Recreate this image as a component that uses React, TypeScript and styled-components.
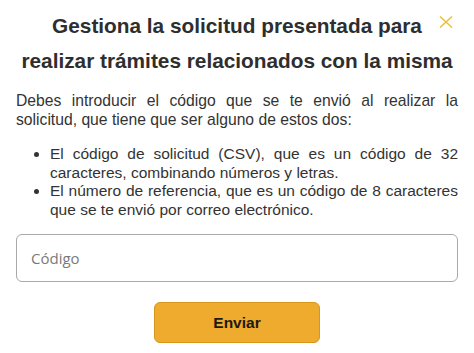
import styled, { createGlobalStyle } from "styled-components";

const GlobalStyle = createGlobalStyle`
  html, body {
    margin: 0;
    padding: 0;
    background: #fff;
  }
  body {
    font-family: "Liberation Sans", Arial, sans-serif;
    color: #333;
  }
`;

const Modal = styled.div`
  position: relative;
  width: 474px;
  box-sizing: border-box;
  padding: 8px 16px 10px;
`;

const Title = styled.h2`
  margin: 0;
  font-size: 20.8px;
  line-height: 35px;
  font-weight: bold;
  text-align: center;
  color: #2e2e2e;
`;

const CloseButton = styled.button`
  position: absolute;
  top: 13px;
  right: 19px;
  width: 18px;
  height: 18px;
  padding: 0;
  border: none;
  background: none;
  cursor: pointer;
  display: flex;
  align-items: center;
  justify-content: center;
`;

const Text = styled.p`
  margin: 14px 0 0;
  font-size: 15.7px;
  line-height: 18.5px;
  text-align: justify;
  color: #333;
`;

const List = styled.ul`
  margin: 16px 0 0;
  padding-left: 34px;
  font-size: 15.5px;
  line-height: 18.5px;
  text-align: justify;
  color: #333;
`;

const Item = styled.li``;

const Input = styled.input`
  display: block;
  width: 100%;
  box-sizing: border-box;
  height: 48px;
  margin-top: 15px;
  padding: 0 14px;
  border: 1px solid #a9a9a9;
  border-radius: 6px;
  font-family: "Open Sans", "Noto Sans", sans-serif;
  font-size: 15px;
  color: #333;
  outline: none;
  &::placeholder {
    color: #7a7a7a;
  }
`;

const Actions = styled.div`
  display: flex;
  justify-content: center;
  margin-top: 20px;
`;

const SubmitButton = styled.button`
  width: 166px;
  height: 41px;
  background: #eeab2d;
  border: 1px solid #d8961c;
  border-radius: 6px;
  font-family: "Liberation Sans", Arial, sans-serif;
  font-size: 15.5px;
  font-weight: bold;
  color: #1d1a14;
  cursor: pointer;
`;

export default function App() {
  return (
    <>
      <GlobalStyle />
      <Modal>
        <CloseButton aria-label="Cerrar">
          <svg width="14" height="12" viewBox="0 0 14 12">
            <path
              d="M1 0.5 L13 11.5 M13 0.5 L1 11.5"
              stroke="#e5c12e"
              strokeWidth="1.4"
              fill="none"
            />
          </svg>
        </CloseButton>
        <Title>
          Gestiona la solicitud presentada para
          <br />
          realizar trámites relacionados con la misma
        </Title>
        <Text>
          Debes introducir el código que se te envió al realizar la solicitud,
          que tiene que ser alguno de estos dos:
        </Text>
        <List>
          <Item>
            El código de solicitud (CSV), que es un código de 32 caracteres,
            combinando números y letras.
          </Item>
          <Item>
            El número de referencia, que es un código de 8 caracteres que se te
            envió por correo electrónico.
          </Item>
        </List>
        <Input placeholder="Código" />
        <Actions>
          <SubmitButton>Enviar</SubmitButton>
        </Actions>
      </Modal>
    </>
  );
}
